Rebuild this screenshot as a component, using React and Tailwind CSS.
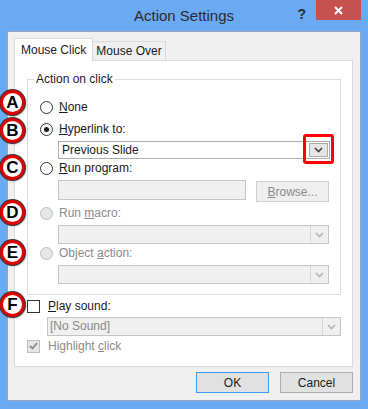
const Chevron = ({ color = "#404040" }) => (
  <svg width="9" height="6" viewBox="0 0 9 6">
    <polyline points="1,1 4.5,4.5 8,1" fill="none" stroke={color} strokeWidth="1.6" />
  </svg>
);

function Radio({ checked, disabled }) {
  return (
    <span
      className={`w-[13px] h-[13px] rounded-full border flex items-center justify-center shrink-0 ${
        disabled ? "border-[#bcbcbc] bg-[#e6e6e6]" : "border-[#333333] bg-white"
      }`}
    >
      {checked && <span className="w-[5px] h-[5px] rounded-full bg-[#1a1a1a]" />}
    </span>
  );
}

function RadioRow({ checked, disabled, children }) {
  return (
    <div className="flex items-center h-[18px] pl-[12px]">
      <Radio checked={checked} disabled={disabled} />
      <span className={`ml-[6px] ${disabled ? "text-[#8a8a8a]" : "text-[#1a1a1a]"}`}>{children}</span>
    </div>
  );
}

function Combo({ value, disabled, className = "" }) {
  if (disabled) {
    return (
      <div className={`flex border border-[#c4c4c4] bg-[#f0f0f0] ${className}`}>
        <span className="flex-1 pl-[2px] text-[#8a8a8a] leading-[17px]">{value}</span>
        <span className="w-[18px] border-l border-[#d6d6d6] flex items-center justify-center">
          <Chevron color="#b4b4b4" />
        </span>
      </div>
    );
  }
  return (
    <div className={`flex border border-[#abadb3] bg-white ${className}`}>
      <span className="flex-1 pl-[3px] text-[#1a1a1a] leading-[16px]">{value}</span>
      <span className="w-[19px] m-[1px] border border-[#acacac] bg-[#e5e5e5] flex items-center justify-center">
        <Chevron />
      </span>
    </div>
  );
}

function Marker({ letter, top }) {
  return (
    <div
      className="absolute left-0 w-[25px] h-[25px] rounded-full bg-white border-[3px] border-[#e10000] shadow-[0_0_0_1px_#3a3a3a,1px_1px_2px_rgba(0,0,0,0.4)] flex items-center justify-center text-[17px] font-bold text-black leading-none"
      style={{ top }}
    >
      {letter}
    </div>
  );
}

export default function App() {
  return (
    <div className="relative w-[368px] h-[409px] bg-[#6aaaf3] font-['Liberation_Sans',Arial,sans-serif] text-[12px] flex flex-col px-[7px] pb-[8px] overflow-hidden">
      {/* Title bar */}
      <div className="h-[31px] flex shrink-0">
        <div className="flex-1" />
        <div className="text-[15px] text-[#2b2b2b] pt-[5px]">Action Settings</div>
        <div className="flex-1 flex justify-end items-start">
          <span className="mt-[4px] mr-[10px] text-[14px] font-bold text-[#2b2b2b]">?</span>
          <span className="w-[45px] h-[20px] bg-[#c75050] flex items-center justify-center">
            <svg width="9" height="9" viewBox="0 0 9 9">
              <path d="M1 1 L8 8 M8 1 L1 8" stroke="#ffffff" strokeWidth="2" />
            </svg>
          </span>
        </div>
      </div>

      {/* Client */}
      <div className="flex-1 bg-[#f0f0f0] border border-[#9aa6b3] pt-[6px] pl-[6px] pr-[7px] pb-[7px] flex flex-col">
        {/* Tabs */}
        <div className="flex items-end h-[22px]">
          <div className="relative z-10 h-[23px] -mb-px bg-white border-x border-t border-[#d9d9d9] flex items-center px-[6px] text-[#1a1a1a]">
            Mouse Click
          </div>
          <div className="h-[19px] -ml-px bg-[#f0f0f0] border-x border-t border-[#d9d9d9] flex items-center px-[3px] text-[#1a1a1a]">
            Mouse Over
          </div>
        </div>

        {/* Panel */}
        <div className="h-[307px] bg-white border border-[#d9d9d9] pt-[10px] pl-[12px] pr-[11px] flex flex-col">
          <fieldset className="border border-[#dcdcdc] px-0 pb-[10px] m-0">
            <legend className="ml-[6px] px-[2px] leading-[16px] text-[#1a1a1a]">Action on click</legend>
            <div className="flex flex-col pt-[11px]">
              <RadioRow>
                <u>N</u>one
              </RadioRow>
              <div className="mt-[4px]">
                <RadioRow checked>
                  <u>H</u>yperlink to:
                </RadioRow>
              </div>
              <Combo value="Previous Slide" className="h-[18px] mt-[3px] ml-[30px] mr-[10px]" />
              <RadioRow>
                <u>R</u>un program:
              </RadioRow>
              <div className="flex items-start h-[22px] mt-[3px] ml-[30px] mr-[11px] gap-[10px]">
                <div className="flex-1 h-[20px] border border-[#c4c4c4] bg-[#f0f0f0]" />
                <div className="w-[73px] h-[21px] mt-px border border-[#cfcfcf] bg-[#efefef] flex items-center justify-center text-[#8a8a8a]">
                  <span>
                    <u>B</u>rowse...
                  </span>
                </div>
              </div>
              <div className="mt-[2px]">
                <RadioRow disabled>
                  Run <u>m</u>acro:
                </RadioRow>
              </div>
              <Combo disabled value="" className="h-[19px] mt-[3px] ml-[30px] mr-[11px]" />
              <RadioRow disabled>
                Object <u>a</u>ction:
              </RadioRow>
              <Combo disabled value="" className="h-[19px] mt-[3px] ml-[30px] mr-[11px]" />
            </div>
          </fieldset>

          <div className="flex items-center h-[18px] mt-[2px]">
            <span className="w-[13px] h-[13px] border border-[#333333] bg-white shrink-0" />
            <span className="ml-[8px] text-[#1a1a1a]">
              <u>P</u>lay sound:
            </span>
          </div>
          <Combo disabled value="[No Sound]" className="h-[19px] mt-[2px] ml-[20px]" />
          <div className="flex items-center h-[18px] mt-[1px]">
            <span className="w-[13px] h-[13px] border border-[#bcbcbc] bg-[#e6e6e6] shrink-0 flex items-center justify-center">
              <svg width="9" height="8" viewBox="0 0 9 8">
                <polyline points="1,4 3.5,6.5 8,1" fill="none" stroke="#8a8a8a" strokeWidth="1.8" />
              </svg>
            </span>
            <span className="ml-[8px] text-[#8a8a8a]">
              Highlight <u>c</u>lick
            </span>
          </div>
        </div>

        {/* Buttons */}
        <div className="flex justify-end gap-[11px] mt-[5px]">
          <div className="w-[73px] h-[21px] border border-[#3c9bf0] bg-[#e1e1e1] flex items-center justify-center text-[#1a1a1a]">
            OK
          </div>
          <div className="w-[73px] h-[21px] border border-[#adadad] bg-[#e1e1e1] flex items-center justify-center text-[#1a1a1a]">
            Cancel
          </div>
        </div>
      </div>

      {/* Callout markers */}
      <Marker letter="A" top={90} />
      <Marker letter="B" top={118} />
      <Marker letter="C" top={155} />
      <Marker letter="D" top={200} />
      <Marker letter="E" top={240} />
      <Marker letter="F" top={292} />
      <div className="absolute left-[303px] top-[134px] w-[31px] h-[30px] border-[3px] border-[#ff0000] rounded-[3px]" />
    </div>
  );
}
